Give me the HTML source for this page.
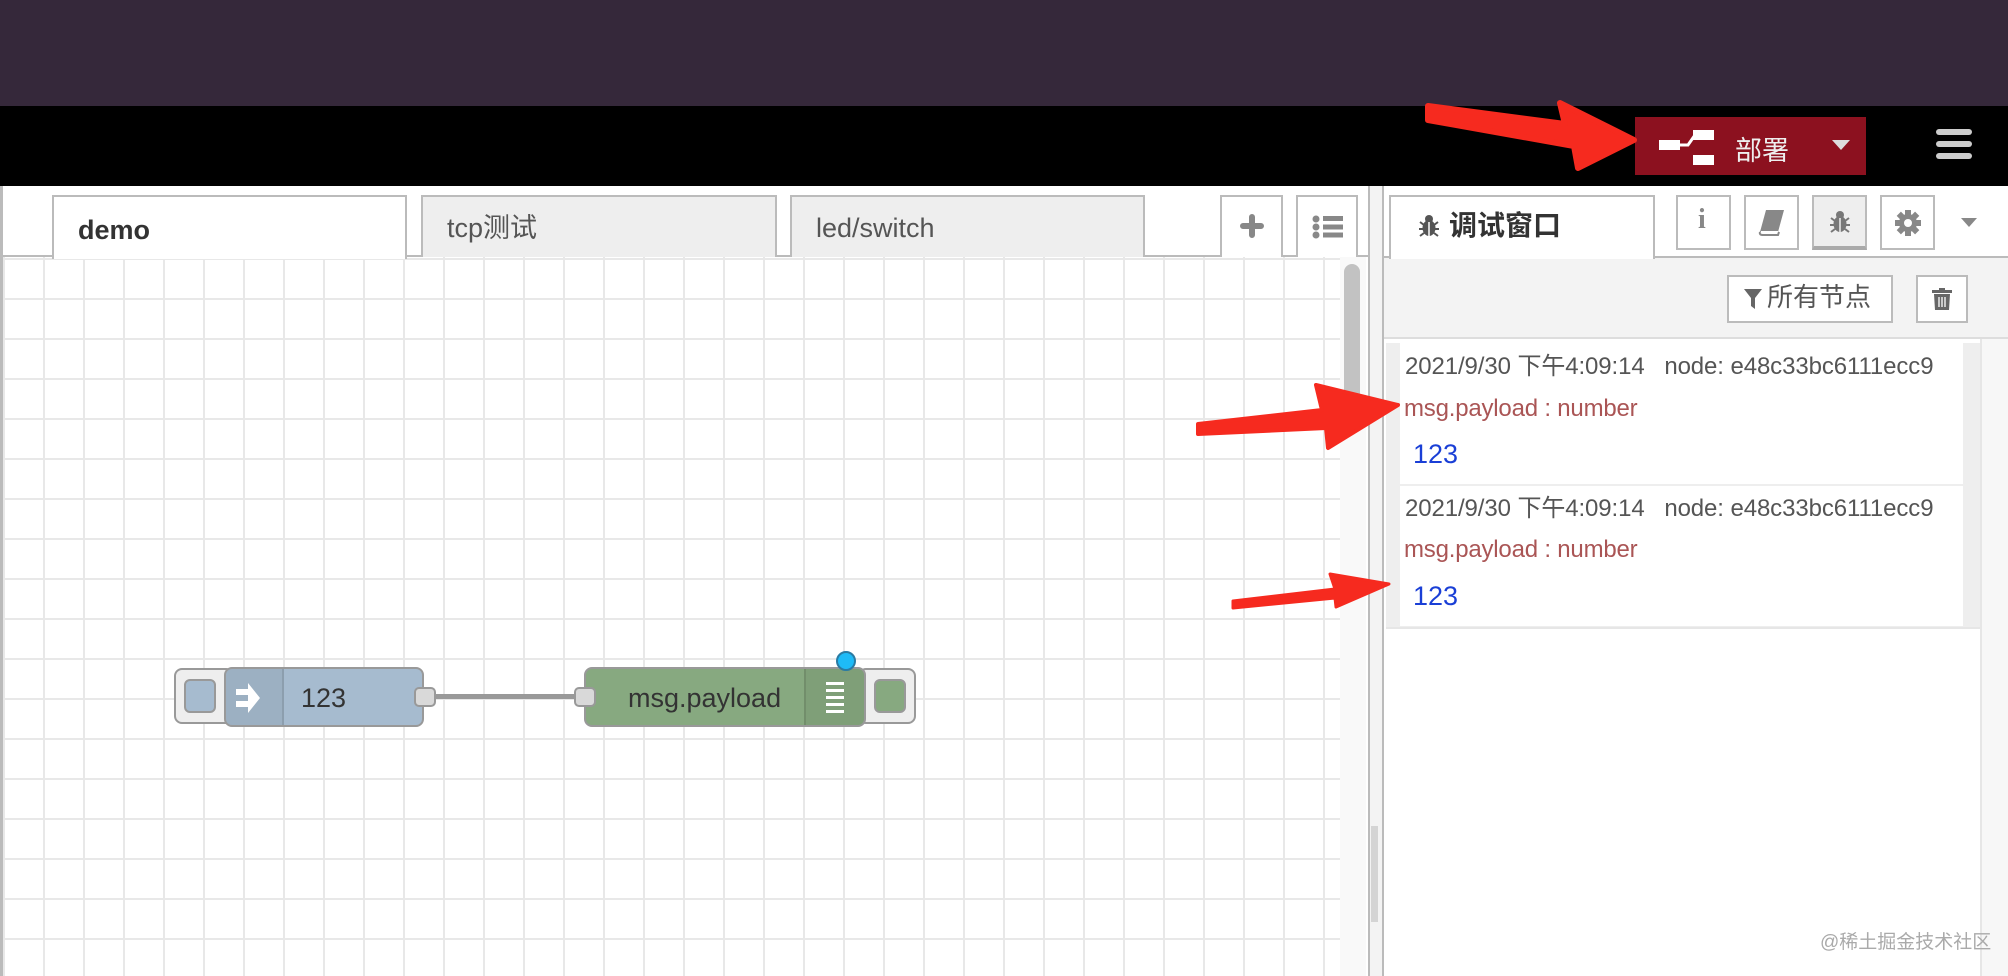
<!DOCTYPE html>
<html><head><meta charset="utf-8"><style>
*{box-sizing:border-box;margin:0;padding:0}
body{width:2008px;height:976px;position:relative;overflow:hidden;background:#fff;font-family:"Liberation Sans","Noto Sans CJK SC",sans-serif}
.a{position:absolute}
.grid{background-color:#fff;background-image:linear-gradient(#e8e8e8 2px,transparent 2px),linear-gradient(90deg,#e8e8e8 2px,transparent 2px);background-size:40px 40px;background-position:0 1px}
.tab{position:absolute;top:195px;height:62px;border:2px solid #bbb;border-bottom:none;background:#eee;color:#555;font-size:27px;line-height:30px;padding:210x 0 0 24px;padding-top:210x}
.tab{padding:210px 0 0 24px}
.tab{padding:18px 0 0 24px}
.btn{position:absolute;border:2px solid #bbb;background:#fff}
.d{font-size:24px;line-height:28px;color:#555;white-space:pre;letter-spacing:-0.1px}
.p{font-size:24px;line-height:28px;color:#a55;letter-spacing:-0.2px}
.n{font-size:27px;line-height:30px;color:#1a3fd6}
</style></head><body>
<div class="a" style="left:0;top:0;width:2008px;height:106px;background:#35283a"></div>
<div class="a" style="left:0;top:106px;width:2008px;height:80px;background:#000"></div>
<div class="a" style="left:1635px;top:117px;width:231px;height:58px;background:#8c111f"></div>
<svg class="a" style="left:1655px;top:128px" width="60" height="40"><rect x="4" y="12" width="21" height="10" fill="#fff"/><path d="M25 17 L33 17 L40 7" stroke="#fff" stroke-width="3" fill="none"/><rect x="38" y="2" width="21" height="10" fill="#fff"/><rect x="38" y="27" width="21" height="10" fill="#fff"/></svg>
<div class="a" style="left:1735px;top:129px;font-size:27px;color:#eee">部署</div>
<svg class="a" style="left:1832px;top:140px" width="18" height="12"><path d="M0 0H18L9 10Z" fill="#ddd"/></svg>
<div class="a" style="left:1936px;top:129px;width:36px;height:6px;background:#ccc;border-radius:3px"></div>
<div class="a" style="left:1936px;top:141px;width:36px;height:6px;background:#ccc;border-radius:3px"></div>
<div class="a" style="left:1936px;top:153px;width:36px;height:6px;background:#ccc;border-radius:3px"></div>
<div class="a" style="left:0;top:186px;width:1368px;height:790px;background:#fff;border-left:3px solid #bbb"></div>
<div class="a grid" style="left:3px;top:257px;width:1337px;height:719px"></div>
<div class="a" style="left:3px;top:255px;width:1365px;height:2px;background:#bbb"></div>
<div class="a" style="left:1340px;top:257px;width:26px;height:719px;background:#f9f9f9"></div>
<div class="a" style="left:1344px;top:264px;width:16px;height:138px;background:#c2c2c2;border-radius:8px"></div>
<div class="tab" style="left:52px;width:355px;background:#fff;color:#333;font-weight:bold;height:64px">demo</div>
<div class="tab" style="left:421px;width:356px;padding-top:16px">tcp测试</div>
<div class="tab" style="left:790px;width:355px;padding-top:16px">led/switch</div>
<div class="btn" style="left:1220px;top:195px;width:63px;height:62px;border-bottom:none"></div>
<svg class="a" style="left:1240px;top:214px" width="24" height="24"><path d="M12 3V21M3 12H21" stroke="#888" stroke-width="6" stroke-linecap="round"/></svg>
<div class="btn" style="left:1296px;top:195px;width:62px;height:62px;border-bottom:none"></div>
<svg class="a" style="left:1312px;top:215px" width="32" height="24"><g fill="#888"><circle cx="4" cy="4" r="3.5"/><circle cx="4" cy="12" r="3.5"/><circle cx="4" cy="20" r="3.5"/><rect x="11" y="1" width="20" height="5"/><rect x="11" y="9.5" width="20" height="5"/><rect x="11" y="17.5" width="20" height="5"/></g></svg>
<div class="a" style="left:174px;top:668px;width:60px;height:56px;background:#eee;border:2px solid #999;border-radius:8px"></div>
<div class="a" style="left:184px;top:679px;width:32px;height:34px;background:#a6bbcf;border:2px solid #999;border-radius:6px"></div>
<div class="a" style="left:435px;top:694px;width:150px;height:5px;background:#999"></div>
<div class="a" style="left:224px;top:667px;width:200px;height:60px;background:#a6bbcf;border:2px solid #999;border-radius:8px;overflow:hidden"><div style="position:absolute;left:0;top:0;width:58px;height:60px;background:rgba(0,0,0,0.06);border-right:2px solid rgba(0,0,0,0.1)"></div><svg style="position:absolute;left:10px;top:12px" width="30" height="34"><path d="M0 8H12V2L24 17L12 32V26H0V20H12V14H0Z" fill="#fff"/></svg><div style="position:absolute;left:75px;top:14px;font-size:27px;color:#333">123</div></div>
<div class="a" style="left:414px;top:687px;width:22px;height:20px;background:#d9d9d9;border:2px solid #999;border-radius:5px"></div>
<div class="a" style="left:858px;top:668px;width:58px;height:56px;background:#eee;border:2px solid #999;border-radius:8px"></div>
<div class="a" style="left:874px;top:679px;width:32px;height:34px;background:#87a980;border:2px solid #999;border-radius:6px"></div>
<div class="a" style="left:584px;top:667px;width:282px;height:60px;background:#87a980;border:2px solid #999;border-radius:8px;overflow:hidden"><div style="position:absolute;right:0;top:0;width:60px;height:60px;background:rgba(0,0,0,0.06);border-left:2px solid rgba(0,0,0,0.1)"></div><svg style="position:absolute;right:18px;top:12px" width="22" height="34"><g fill="#fff"><rect x="2" y="1" width="18" height="3"/><rect x="2" y="8" width="18" height="3"/><rect x="2" y="15" width="18" height="3"/><rect x="2" y="22" width="18" height="3"/><rect x="2" y="29" width="18" height="3"/></g></svg><div style="position:absolute;left:42px;top:14px;font-size:27px;color:#333">msg.payload</div></div>
<div class="a" style="left:574px;top:687px;width:22px;height:20px;background:#d9d9d9;border:2px solid #999;border-radius:5px"></div>
<div class="a" style="left:836px;top:651px;width:20px;height:20px;background:#1ebbf7;border:2px solid #2a7ba3;border-radius:50%"></div>
<div class="a" style="left:1368px;top:186px;width:16px;height:790px;background:#f3f3f3;border-left:2px solid #bbb;border-right:2px solid #bbb"></div>
<div class="a" style="left:1371px;top:826px;width:7px;height:96px;background:#d4d4d4"></div>
<div class="a" style="left:1384px;top:186px;width:624px;height:790px;background:#fff"></div>
<div class="a" style="left:1384px;top:256px;width:624px;height:83px;background:#f3f3f3;border-top:2px solid #bbb;border-bottom:2px solid #ddd"></div>
<div class="tab" style="left:1389px;width:266px;background:#fff;color:#333;font-weight:bold;height:64px;padding:14px 0 0 26px;font-size:28px"><svg width="24" height="24" style="vertical-align:-3px;margin-right:8px"><g fill="#555"><ellipse cx="12" cy="14" rx="6.5" ry="8"/><circle cx="12" cy="5" r="4"/></g><path d="M3 8l4 3M21 8l-4 3M2 15h5M22 15h-5M3 22l4-3M21 22l-4-3" stroke="#555" stroke-width="2"/><path d="M12 8v15" stroke="#fff" stroke-width="1.5"/></svg>调试窗口</div>
<div class="btn" style="left:1676px;top:195px;width:55px;height:55px"></div>
<div class="a" style="left:1698px;top:204px;font-size:28px;font-weight:bold;color:#888;font-family:'Liberation Serif',serif">i</div>
<div class="btn" style="left:1744px;top:195px;width:55px;height:55px"></div>
<svg class="a" style="left:1758px;top:208px" width="28" height="28"><path d="M8 2H26L20 24H2Z" fill="#888"/><path d="M3 24H20" stroke="#fff" stroke-width="2"/><path d="M2 24Q1 27 5 27H20L21 24" fill="none" stroke="#888" stroke-width="2"/></svg>
<div class="btn" style="left:1812px;top:195px;width:55px;height:55px;background:#eee;border-bottom:4px solid #aaa"></div>
<svg class="a" style="left:1828px;top:210px" width="24" height="24"><g fill="#777"><ellipse cx="12" cy="14" rx="6.5" ry="8"/><circle cx="12" cy="5" r="4"/></g><path d="M3 8l4 3M21 8l-4 3M2 15h5M22 15h-5M3 22l4-3M21 22l-4-3" stroke="#777" stroke-width="2"/><path d="M12 8v15" stroke="#eee" stroke-width="1.5"/></svg>
<div class="btn" style="left:1880px;top:195px;width:55px;height:55px"></div>
<svg class="a" style="left:1894px;top:209px" width="28" height="28"><g transform="translate(14 14)" fill="#888"><circle r="9"/><rect x="-3" y="-13" width="6" height="26"/><rect x="-3" y="-13" width="6" height="26" transform="rotate(45)"/><rect x="-3" y="-13" width="6" height="26" transform="rotate(90)"/><rect x="-3" y="-13" width="6" height="26" transform="rotate(135)"/><circle r="4" fill="#fff"/></g></svg>
<svg class="a" style="left:1961px;top:218px" width="16" height="10"><path d="M0 0H16L8 9Z" fill="#888"/></svg>
<div class="btn" style="left:1727px;top:275px;width:166px;height:48px"></div>
<svg class="a" style="left:1744px;top:289px" width="18" height="20"><path d="M0 0H18L11 9V20L7 17V9Z" fill="#666"/></svg>
<div class="a" style="left:1767px;top:282px;font-size:26px;line-height:30px;color:#555">所有节点</div>
<div class="btn" style="left:1916px;top:275px;width:52px;height:48px"></div>
<svg class="a" style="left:1932px;top:288px" width="20" height="22"><g fill="#666"><rect x="0" y="2" width="20" height="3"/><rect x="7" y="0" width="6" height="3"/><path d="M2 6H18L17 22H3Z"/></g><path d="M7 9V19M10 9V19M13 9V19" stroke="#fff" stroke-width="1.3"/></svg>
<div class="a" style="left:1386px;top:343px;width:594px;height:285px;background:#eee"></div>
<div class="a" style="left:1400px;top:343px;width:563px;height:141px;background:#fff"></div>
<div class="a" style="left:1400px;top:486px;width:563px;height:140px;background:#fff"></div>
<div class="a" style="left:1386px;top:627px;width:594px;height:2px;background:#e6e6e6"></div>
<div class="a" style="left:1980px;top:339px;width:28px;height:637px;background:#f7f7f7;border-left:2px solid #e6e6e6"></div>
<div class="a d" style="left:1405px;top:353px">2021/9/30 下午4:09:14   node: e48c33bc6111ecc9</div>
<div class="a p" style="left:1404px;top:395px">msg.payload : number</div>
<div class="a n" style="left:1413px;top:439px">123</div>
<div class="a d" style="left:1405px;top:495px">2021/9/30 下午4:09:14   node: e48c33bc6111ecc9</div>
<div class="a p" style="left:1404px;top:536px">msg.payload : number</div>
<div class="a n" style="left:1413px;top:581px">123</div>
<div class="a" style="left:1820px;top:927px;font-size:19px;color:#aaa">@稀土掘金技术社区</div>
<svg class="a" style="left:0;top:0" width="2008" height="976">
<g fill="#f62a1f">
<path d="M1428 106 L1565 124 L1560 103 L1634 140 L1578 168 L1574 146 L1428 120 Z" stroke="#f62a1f" stroke-width="6" stroke-linejoin="round"/>
<path d="M1198 424 L1322 410 L1316 385 L1398 405 L1328 448 L1326 428 L1198 434 Z" stroke="#f62a1f" stroke-width="4" stroke-linejoin="round"/>
<path d="M1233 601 L1335 589 L1330 574 L1389 584 L1336 607 L1335 598 L1233 608 Z" stroke="#f62a1f" stroke-width="3" stroke-linejoin="round"/>
</g></svg>
</body></html>
